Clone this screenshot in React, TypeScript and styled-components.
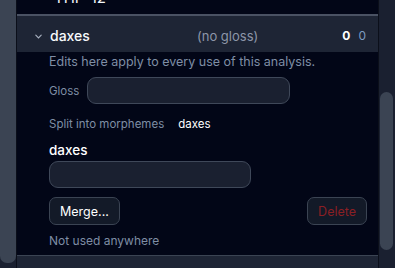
import styled, { createGlobalStyle } from 'styled-components';

const GlobalStyle = createGlobalStyle`
  html, body {
    margin: 0;
    padding: 0;
    background: #020617;
    font-family: Inter, "Noto Sans", sans-serif;
  }
`;

const Frame = styled.div`
  display: flex;
  width: 395px;
  height: 268px;
  overflow: hidden;
  background: #020617;
`;

const Rail = styled.div`
  width: 16px;
  flex-shrink: 0;
  background: #1a2030;
  border-right: 1px solid #0b0f1a;
  display: flex;
  flex-direction: column;
`;

const RailThumb = styled.div`
  height: 263px;
  background: #3b4453;
  border-radius: 0 0 7px 7px;
`;

const List = styled.div`
  width: 361px;
  flex-shrink: 0;
  display: flex;
  flex-direction: column;
  border-right: 1px solid #0b0f1a;
`;

const PrevItem = styled.div`
  height: 14px;
  flex-shrink: 0;
  overflow: hidden;
  display: flex;
  flex-direction: column;
  justify-content: flex-end;
  padding-left: 37px;
  border-bottom: 2px solid #4a5263;
`;

const PrevTitle = styled.div`
  color: #f1f5f9;
  font-size: 15px;
  line-height: 12px;
  margin-bottom: 10px;
`;

const Header = styled.div`
  height: 36px;
  flex-shrink: 0;
  box-sizing: border-box;
  padding: 3px 12px 0 17px;
  display: grid;
  grid-template-columns: 16px 147px 1fr auto;
  align-items: center;
  background: #1e2535;
`;

const Chevron = styled.svg`
  width: 9px;
  height: 9px;
  margin-top: 1px;
`;

const Title = styled.span`
  color: #f8fafc;
  font-size: 14px;
  font-weight: 500;
`;

const NoGloss = styled.span`
  color: #8d96a8;
  font-size: 13px;
`;

const Counts = styled.div`
  display: flex;
  gap: 8px;
  font-size: 12px;
`;

const Count = styled.span<{ $primary?: boolean }>`
  color: ${(p) => (p.$primary ? '#ffffff' : '#7d9cc0')};
  font-weight: ${(p) => (p.$primary ? 700 : 400)};
`;

const Body = styled.div`
  padding: 2px 11px 0 32px;
  display: flex;
  flex-direction: column;
  height: 204px;
  flex-shrink: 0;
  box-sizing: border-box;
  border-bottom: 1px solid #3b4453;

  & > * {
    flex-shrink: 0;
  }
`;

const Hint = styled.div`
  color: #7f8ea5;
  font-size: 12.5px;
  line-height: 16px;
`;

const FieldRow = styled.div`
  display: flex;
  align-items: center;
  gap: 8px;
  margin-top: 7px;
`;

const Label = styled.span`
  color: #7f8ea5;
  font-size: 11.5px;
`;

const Value = styled.span`
  color: #ffffff;
  font-size: 11.5px;
`;

const Input = styled.input<{ $width: number }>`
  width: ${(p) => p.$width}px;
  height: 27px;
  box-sizing: border-box;
  background: #1a2030;
  border: 1px solid #3f4859;
  border-radius: 9px;
  outline: none;
  color: #fff;
`;

const SplitRow = styled.div`
  display: flex;
  align-items: center;
  gap: 14px;
  margin-top: 12px;
  line-height: 16px;
`;

const Morpheme = styled.div`
  color: #ffffff;
  font-size: 13.5px;
  font-weight: 500;
  margin: 9px 0 2px;
  line-height: 18px;
`;

const Buttons = styled.div`
  display: flex;
  justify-content: space-between;
  margin-top: 9px;
`;

const Button = styled.button<{ $danger?: boolean }>`
  height: 28px;
  padding: 0 10px;
  background: #131a28;
  border: 1px solid #3b4453;
  border-radius: 7px;
  font-family: inherit;
  font-size: 12.5px;
  color: ${(p) => (p.$danger ? '#8b1f24' : '#ffffff')};
`;

const Footnote = styled.div`
  color: #7f8ea5;
  font-size: 12px;
  margin-top: 8px;
`;

const NextItem = styled.div`
  flex: 1;
  background: #1e2535;
`;

const Scrollbar = styled.div`
  flex: 1;
  background: #1a2030;
  padding: 92px 2px 0 1px;
`;

const ScrollThumb = styled.div`
  height: 158px;
  background: #3b4453;
  border-radius: 7px;
`;

export default function App() {
  return (
    <>
      <GlobalStyle />
      <Frame>
        <Rail>
          <RailThumb />
        </Rail>
        <List>
          <PrevItem>
            <PrevTitle>THP-12</PrevTitle>
          </PrevItem>
          <Header>
            <Chevron viewBox="0 0 10 10">
              <path d="M2 3.5 L5 6.5 L8 3.5" stroke="#a7b0bf" strokeWidth="1.3" fill="none" strokeLinecap="round" />
            </Chevron>
            <Title>daxes</Title>
            <NoGloss>(no gloss)</NoGloss>
            <Counts>
              <Count $primary>0</Count>
              <Count>0</Count>
            </Counts>
          </Header>
          <Body>
            <Hint>Edits here apply to every use of this analysis.</Hint>
            <FieldRow>
              <Label>Gloss</Label>
              <Input $width={203} />
            </FieldRow>
            <SplitRow>
              <Label>Split into morphemes</Label>
              <Value>daxes</Value>
            </SplitRow>
            <Morpheme>daxes</Morpheme>
            <Input $width={202} />
            <Buttons>
              <Button>Merge...</Button>
              <Button $danger>Delete</Button>
            </Buttons>
            <Footnote>Not used anywhere</Footnote>
          </Body>
          <NextItem />
        </List>
        <Scrollbar>
          <ScrollThumb />
        </Scrollbar>
      </Frame>
    </>
  );
}
